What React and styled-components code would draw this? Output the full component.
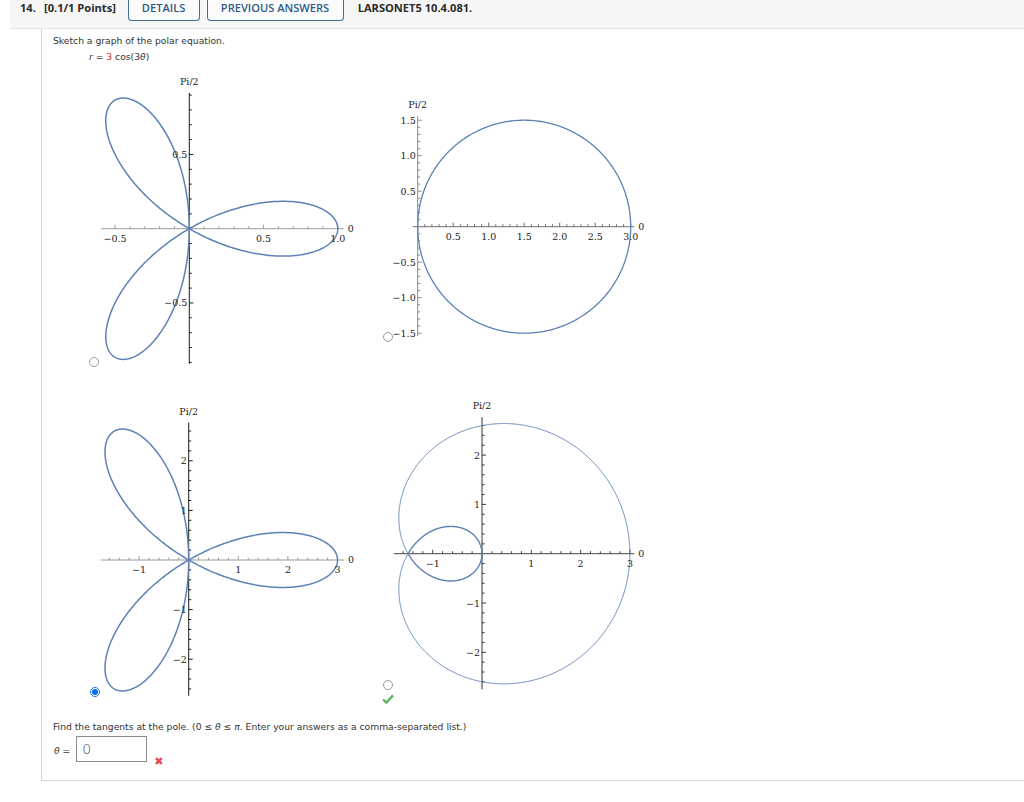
import React from 'react';
import styled, { createGlobalStyle } from 'styled-components';

const GlobalStyle = createGlobalStyle`
  html, body { margin: 0; padding: 0; background: #fff; }
  body { font-family: "DejaVu Sans", Verdana, sans-serif; color: #333; }
`;

const CURVE = '#5e81b5';

const Header = styled.div`
  margin-left: 10px;
  height: 28px;
  background: #f6f6f6;
  border-bottom: 1px solid #e3e3e3;
  display: flex;
  align-items: flex-start;
  font-family: "Open Sans", sans-serif;
  font-size: 11.1px;
  color: #2a2a2a;
`;

const Num = styled.span`
  font-weight: 700;
  line-height: 16px;
  margin-left: 10px;
  width: 24px;
`;

const Points = styled.span`
  font-weight: 700;
  line-height: 16px;
  margin-right: 12px;
`;

const TabButton = styled.div`
  height: 21px;
  box-sizing: border-box;
  padding: 0 13.5px 0 13px;
  border: 1px solid #3f6d98;
  border-top: none;
  border-radius: 0 0 4px 4px;
  color: #2d5b88;
  font-weight: 600;
  line-height: 16px;
  margin-right: ${p => p.$gap}px;
  background: #fbfbfb;
`;

const Ref = styled.span`
  font-weight: 700;
  line-height: 16px;
`;

const Panel = styled.div`
  margin-left: 41px;
  border-left: 1px solid #d6d6d6;
  border-bottom: 1px solid #d6d6d6;
  padding: 6px 0 13px 11px;
  font-size: 9.2px;
  color: #333;
`;

const Prompt = styled.div`
  line-height: 12px;
`;

const Equation = styled.div`
  margin: 4px 0 0 36px;
  line-height: 12px;
  i { font-style: italic; }
`;

const Red = styled.span`
  color: #e0302c;
`;

const Options = styled.div`
  display: grid;
  grid-template-columns: 290px 290px;
  margin: 6px 0 0 33px;
`;

const Cell = styled.div`
  position: relative;
  height: 322px;
  svg.plot { display: block; }
`;

const Radio = styled.span`
  position: absolute;
  left: ${p => p.$x - 5}px;
  top: ${p => p.$y - 5}px;
  width: 10px;
  height: 10px;
  box-sizing: border-box;
  border-radius: 50%;
  border: 1px solid ${p => (p.$checked ? '#1a73e8' : '#9a9a9a')};
  background: #fff;
  display: flex;
  align-items: center;
  justify-content: center;
  &::after {
    content: '';
    width: 6px;
    height: 6px;
    border-radius: 50%;
    background: ${p => (p.$checked ? '#0b6cf2' : 'transparent')};
  }
`;

const Tick = styled.span`
  position: absolute;
  left: ${p => p.$x - 6}px;
  top: ${p => p.$y - 5}px;
  line-height: 0;
`;

const Question = styled.div`
  margin-top: 8px;
  line-height: 12px;
`;

const AnswerRow = styled.div`
  display: flex;
  align-items: flex-start;
  margin-top: 3px;
`;

const Theta = styled.span`
  margin: 9px 6px 0 1px;
  font-style: normal;
  line-height: 12px;
  i { font-style: italic; }
`;

const AnswerBox = styled.div`
  width: 71px;
  height: 26px;
  box-sizing: border-box;
  border: 1px solid #8c8c8c;
  font-family: "DejaVu Sans", sans-serif;
  font-size: 14px;
  color: #3b4f66;
  line-height: 24px;
  padding-left: 5px;
  font-weight: 300;
`;

const Wrong = styled.span`
  margin: 20px 0 0 7px;
  color: #ec4a52;
  font-size: 11px;
  line-height: 11px;
`;

function polarPath(f, t0, t1, n, ox, oy, s) {
  let d = '';
  for (let i = 0; i <= n; i++) {
    const t = t0 + ((t1 - t0) * i) / n;
    const r = f(t);
    const x = ox + r * Math.cos(t) * s;
    const y = oy - r * Math.sin(t) * s;
    d += (i === 0 ? 'M' : 'L') + x.toFixed(2) + ' ' + y.toFixed(2);
  }
  return d;
}

function Plot({ g }) {
  const { w, h, ox, oy, s, x0, x1, y0, y1, step, major, xLabels, yLabels, curves, xColor, yColor } = g;
  const X = v => ox + v * s;
  const Y = v => oy - v * s;
  const marks = [];
  for (let k = Math.ceil(x0 / step - 1e-9); k * step <= x1 + 1e-9; k++) {
    if (k === 0) continue;
    const v = k * step;
    const m = Math.abs(v / major - Math.round(v / major)) < 1e-6;
    marks.push(<line key={'x' + k} x1={X(v)} x2={X(v)} y1={oy} y2={oy - (m ? 4 : 2.5)} stroke={xColor} strokeWidth="1" />);
  }
  for (let k = Math.ceil(y0 / step - 1e-9); k * step <= y1 + 1e-9; k++) {
    if (k === 0) continue;
    const v = k * step;
    const m = Math.abs(v / major - Math.round(v / major)) < 1e-6;
    marks.push(<line key={'y' + k} y1={Y(v)} y2={Y(v)} x1={ox} x2={ox + (m ? 4 : 2.5)} stroke={yColor} strokeWidth="1" />);
  }
  return (
    <svg className="plot" width={w} height={h} viewBox={`0 0 ${w} ${h}`}>
      <g fontFamily='"DejaVu Serif", serif' fontSize="9.5" fill="#222">
        <line x1={X(x0)} x2={X(x1)} y1={oy} y2={oy} stroke={xColor} strokeWidth="1" />
        <line x1={ox} x2={ox} y1={Y(y1)} y2={Y(y0)} stroke={yColor} strokeWidth="1" />
        {marks}
        {curves.map((c, i) => (
          <path key={i} d={polarPath(c.f, c.t0, c.t1, 720, ox, oy, s)} fill="none" stroke={CURVE} strokeWidth={c.sw} />
        ))}
        <text x={ox} y={Y(y1) - 8} textAnchor="middle">Pi/2</text>
        <text x={X(x1) + 4} y={oy + 3}>0</text>
        {xLabels.map(([v, t]) => (
          <text key={'lx' + v} x={X(v)} y={oy + 13} textAnchor="middle">{t}</text>
        ))}
        {yLabels.map(([v, t]) => (
          <text key={'ly' + v} x={ox - 2} y={Y(v) + 3.5} textAnchor="end">{t}</text>
        ))}
      </g>
    </svg>
  );
}

const M = '\u2212';

const graphs = [
  {
    w: 290, h: 322, ox: 103.3, oy: 159.7, s: 148.5,
    x0: -0.595, x1: 1.04, y0: -0.91, y1: 0.915, step: 0.1, major: 0.5,
    xColor: '#9a9a9a', yColor: '#1a1a1a',
    xLabels: [[-0.5, M + '0.5'], [0.5, '0.5'], [1, '1.0']],
    yLabels: [[0.5, '0.5'], [-0.5, M + '0.5']],
    curves: [{ f: t => Math.cos(3 * t), t0: 0, t1: Math.PI, sw: 1.5 }],
    radio: [8, 293],
  },
  {
    w: 290, h: 322, ox: 41.7, oy: 157.7, s: 71,
    x0: -0.07, x1: 3.05, y0: -1.54, y1: 1.56, step: 0.1, major: 0.5,
    xColor: '#6e6e6e', yColor: '#8a8a8a',
    xLabels: [[0.5, '0.5'], [1, '1.0'], [1.5, '1.5'], [2, '2.0'], [2.5, '2.5'], [3, '3.0']],
    yLabels: [[1.5, '1.5'], [1, '1.0'], [0.5, '0.5'], [-0.5, M + '0.5'], [-1, M + '1.0'], [-1.5, M + '1.5']],
    curves: [{ f: t => 3 * Math.cos(t), t0: 0, t1: Math.PI, sw: 1.3 }],
    radio: [11.7, 268],
  },
  {
    w: 290, h: 322, ox: 102.7, oy: 169, s: 49.6,
    x0: -1.77, x1: 3.13, y0: -2.74, y1: 2.77, step: 0.2, major: 1,
    xColor: '#9a9a9a', yColor: '#1a1a1a',
    xLabels: [[-1, M + '1'], [1, '1'], [2, '2'], [3, '3']],
    yLabels: [[2, '2'], [1, '1'], [-1, M + '1'], [-2, M + '2']],
    curves: [{ f: t => 3 * Math.cos(3 * t), t0: 0, t1: Math.PI, sw: 1.5 }],
    radio: [9, 301],
    checked: true,
  },
  {
    w: 290, h: 322, ox: 106, oy: 162.7, s: 49.3,
    x0: -1.79, x1: 3.09, y0: -2.75, y1: 2.77, step: 0.2, major: 1,
    xColor: '#444', yColor: '#333',
    xLabels: [[-1, M + '1'], [1, '1'], [2, '2'], [3, '3']],
    yLabels: [[2, '2'], [1, '1'], [-1, M + '1'], [-2, M + '2']],
    curves: [
      { f: t => 3 * Math.cos(t / 3), t0: 0, t1: Math.PI, sw: 1 },
      { f: t => 3 * Math.cos(t / 3), t0: Math.PI, t1: 2 * Math.PI, sw: 1.4 },
      { f: t => 3 * Math.cos(t / 3), t0: 2 * Math.PI, t1: 3 * Math.PI, sw: 1 },
    ],
    radio: [12.3, 294.3],
    correct: true,
  },
];

export default function App() {
  return (
    <>
      <GlobalStyle />
      <Header>
        <Num>14.</Num>
        <Points>[0.1/1 Points]</Points>
        <TabButton $gap={7}>DETAILS</TabButton>
        <TabButton $gap={14}>PREVIOUS ANSWERS</TabButton>
        <Ref>LARSONET5 10.4.081.</Ref>
      </Header>
      <Panel>
        <Prompt>Sketch a graph of the polar equation.</Prompt>
        <Equation>
          <i>r</i> = <Red>3</Red> cos(3<i>θ</i>)
        </Equation>
        <Options>
          {graphs.map((g, i) => (
            <Cell key={i}>
              <Plot g={g} />
              <Radio $x={g.radio[0]} $y={g.radio[1]} $checked={g.checked} />
              {g.correct && (
                <Tick $x={12} $y={308}>
                  <svg width="12" height="10" viewBox="0 0 12 10">
                    <path d="M1 5.5 L4.3 8.6 L11 1.4" fill="none" stroke="#5cb85c" strokeWidth="2.4" strokeLinejoin="round" />
                  </svg>
                </Tick>
              )}
            </Cell>
          ))}
        </Options>
        <Question>
          Find the tangents at the pole. (0 ≤ <i>θ</i> ≤ <i>π</i>. Enter your answers as a comma-separated list.)
        </Question>
        <AnswerRow>
          <Theta><i>θ</i> =</Theta>
          <AnswerBox>0</AnswerBox>
          <Wrong>✖</Wrong>
        </AnswerRow>
      </Panel>
    </>
  );
}
